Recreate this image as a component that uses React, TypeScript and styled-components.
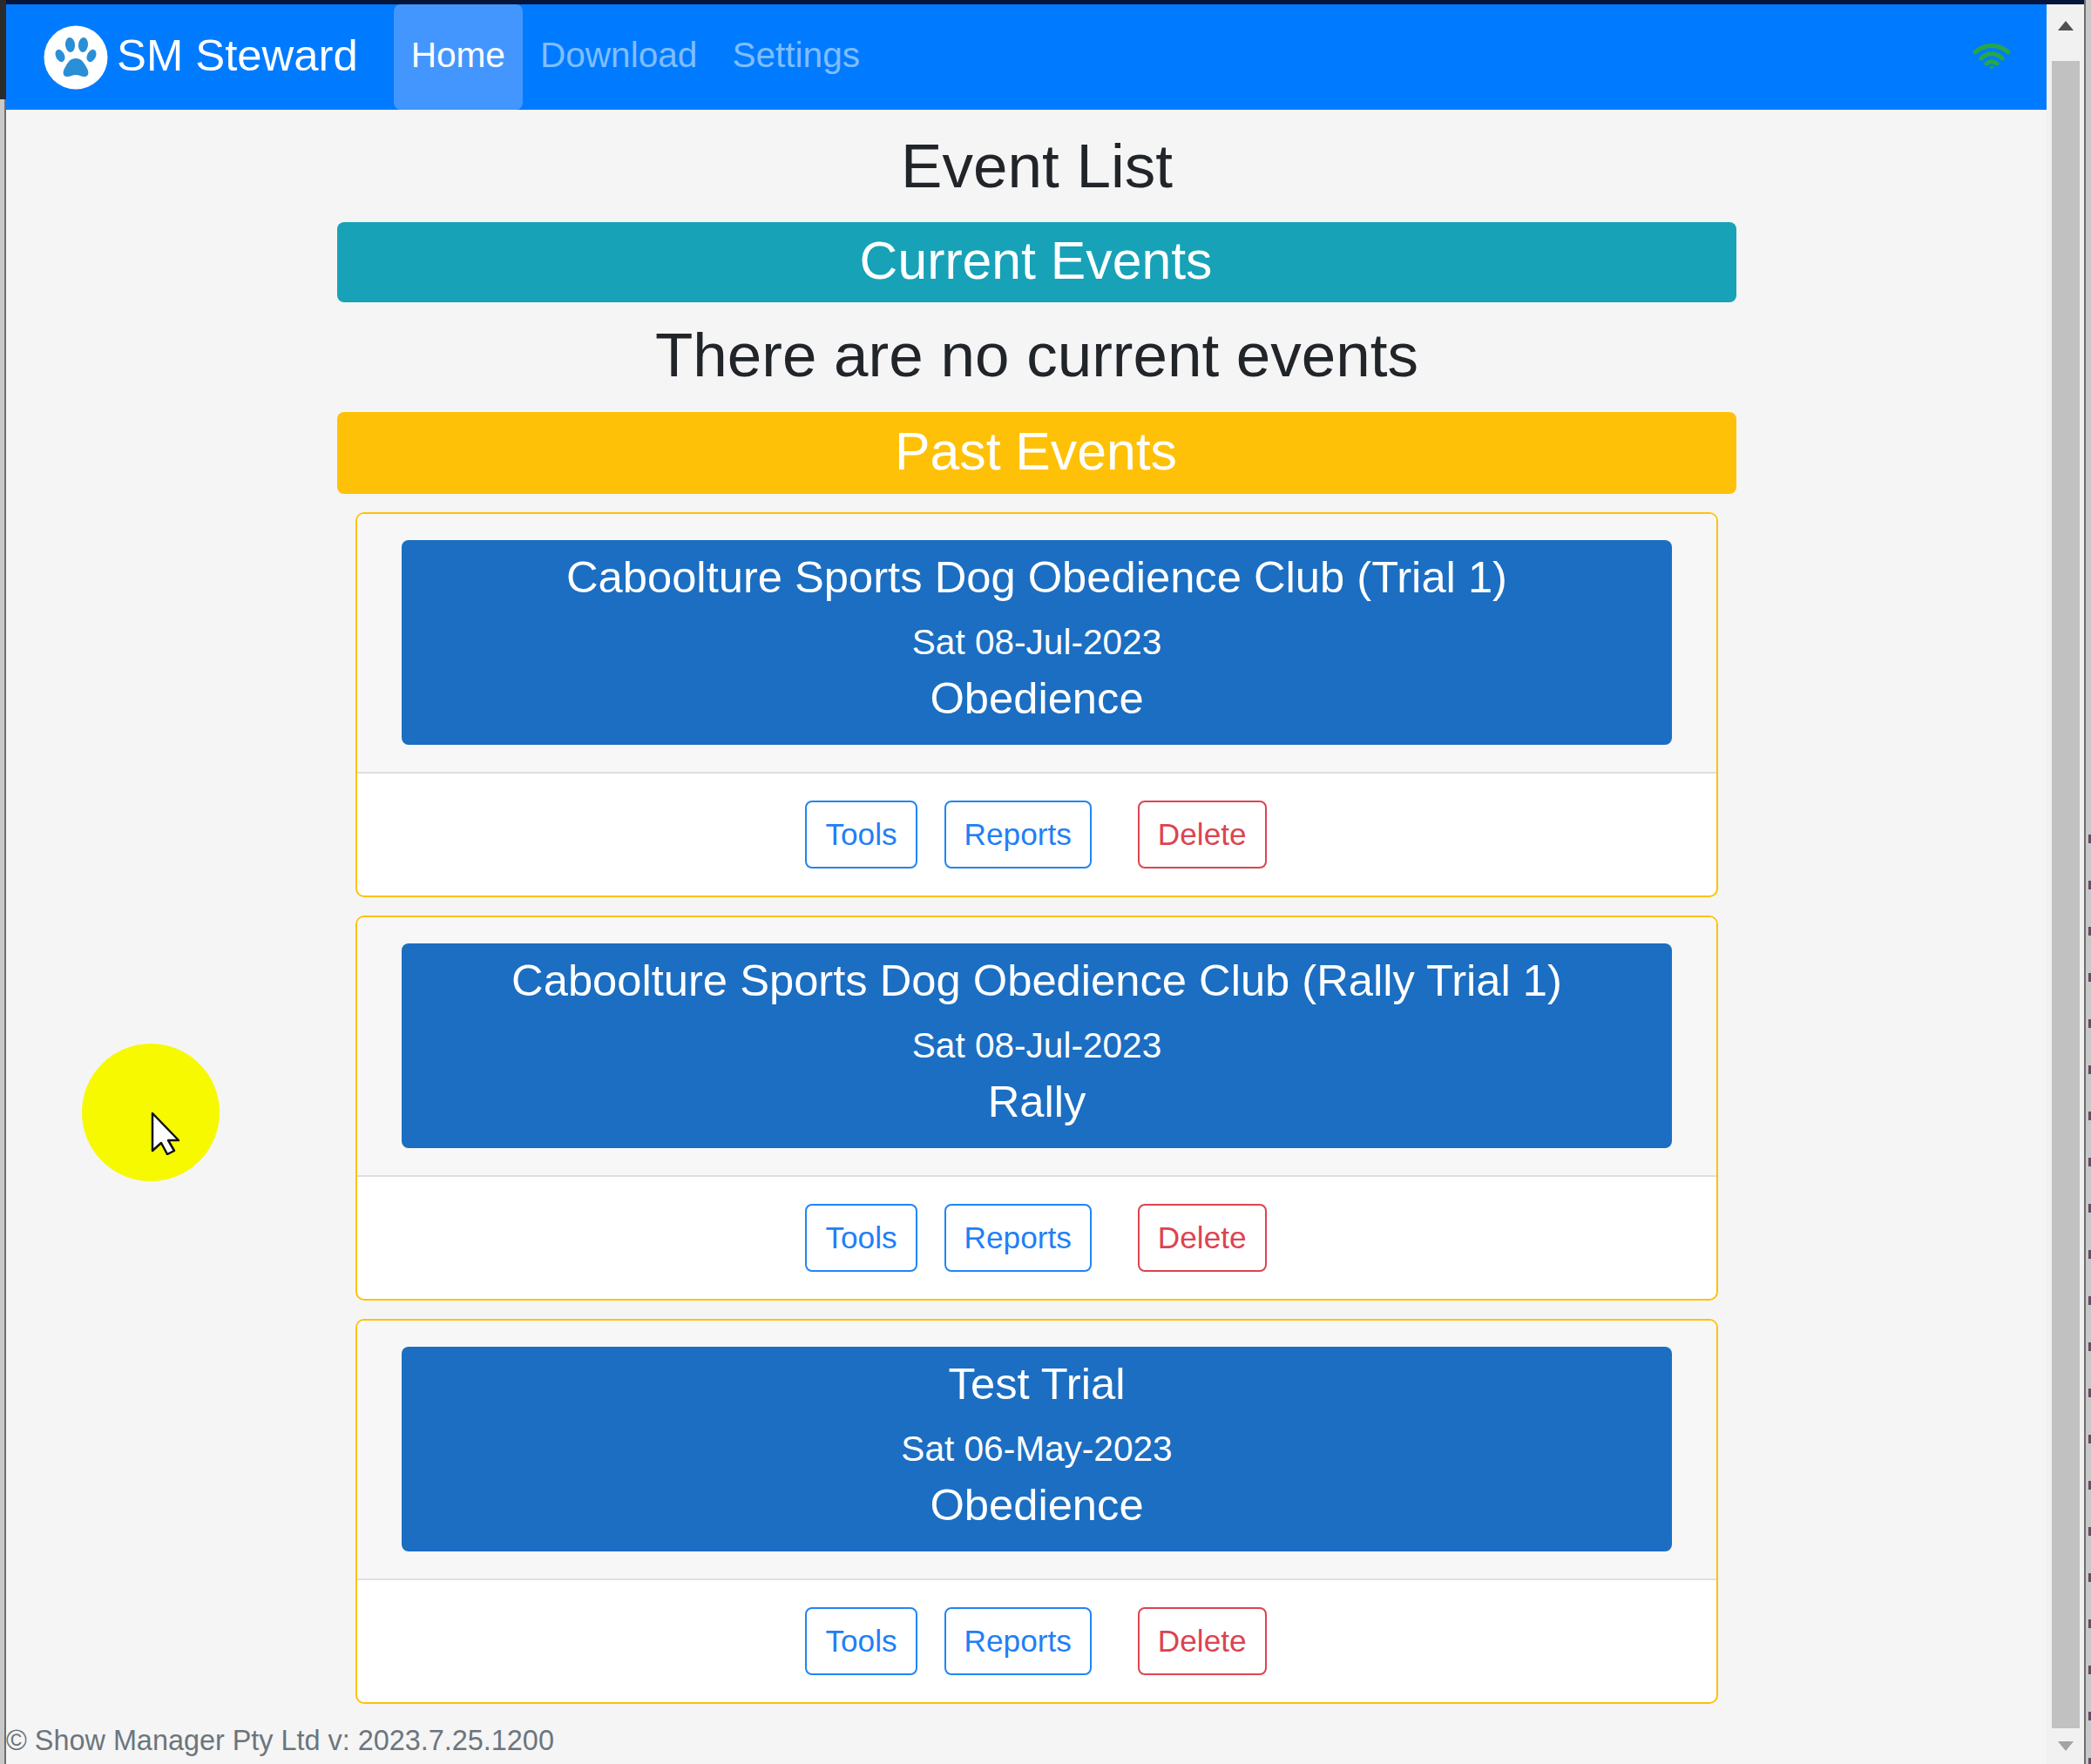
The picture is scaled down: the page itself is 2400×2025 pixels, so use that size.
import styled, { createGlobalStyle } from 'styled-components';

const GlobalStyle = createGlobalStyle`
  html, body {
    margin: 0;
    padding: 0;
    height: 2025px;
    overflow: hidden;
    background: #f5f5f5;
    font-family: "Liberation Sans", Arial, sans-serif;
  }
  * {
    box-sizing: border-box;
  }
`;

const Frame = styled.div`
  position: relative;
  display: flex;
  width: 2400px;
  height: 2025px;
`;

const LeftEdge = styled.div`
  flex: 0 0 7px;
  display: flex;
  flex-direction: column;
`;

const LeftEdgeDark = styled.div`
  flex: 0 0 114px;
  background: #2b2b2b;
`;

const LeftEdgeLight = styled.div`
  flex: 1;
  background: #c9c9c9;
  border-right: 2px solid #6e6e6e;
`;

const Main = styled.div`
  flex: 0 0 2385px;
  display: flex;
  flex-direction: column;
`;

const TopStrip = styled.div`
  flex: 0 0 5px;
  background: #04143a;
`;

const MainRow = styled.div`
  flex: 1;
  display: flex;
  min-height: 0;
`;

const Viewport = styled.div`
  flex: 0 0 2342px;
  display: flex;
  flex-direction: column;
  background: #f5f5f5;
`;

const Navbar = styled.nav`
  flex: 0 0 121px;
  display: flex;
  align-items: stretch;
  background: #007bff;
  padding: 0 41px 0 43px;
`;

const Brand = styled.a`
  display: flex;
  align-items: center;
  gap: 10px;
  margin-right: 41px;
  color: #fff;
  font-size: 50.8px;
`;

const BrandName = styled.span`
  padding-bottom: 5px;
`;

const NavLink = styled.a<{ $active?: boolean }>`
  display: flex;
  align-items: center;
  padding: 0 20px 5px;
  border-radius: 8px;
  font-size: 40.6px;
  color: ${(p) => (p.$active ? '#fff' : '#7fbdff')};
  background: ${(p) => (p.$active ? '#4496ff' : 'transparent')};
`;

const NavSpacer = styled.div`
  flex: 1;
`;

const WifiWrap = styled.div`
  display: flex;
  align-items: center;
  padding-bottom: 4px;
`;

const Content = styled.main`
  width: 1606px;
  margin-left: 380px;
`;

const PageTitle = styled.h1`
  margin: 0;
  height: 129px;
  line-height: 129px;
  font-size: 71px;
  font-weight: 400;
  text-align: center;
  color: #212529;
`;

const SectionBar = styled.h2<{ $tone: string; $height: number }>`
  margin: 0;
  height: ${(p) => p.$height}px;
  line-height: ${(p) => p.$height - 3}px;
  padding-right: 2px;
  font-size: 60.7px;
  font-weight: 400;
  text-align: center;
  color: #fff;
  background: ${(p) => p.$tone};
  border-radius: 8px;
`;

const EmptyNote = styled.h1`
  margin: 0;
  height: 126px;
  line-height: 122px;
  font-size: 71px;
  font-weight: 400;
  text-align: center;
  color: #212529;
`;

const CardList = styled.div`
  display: flex;
  flex-direction: column;
  gap: 21px;
  margin: 21px 21px 0;
`;

const Card = styled.section`
  height: 442px;
  display: flex;
  flex-direction: column;
  border: 2px solid #ffc107;
  border-radius: 10px;
  background: #fff;
  overflow: hidden;
`;

const CardHeader = styled.div`
  flex: 0 0 298px;
  padding: 30px 51px 0;
  background: #f7f7f7;
  border-bottom: 2px solid #dfdfdf;
`;

const EventBanner = styled.div`
  height: 235px;
  padding-top: 10px;
  text-align: center;
  color: #fff;
  background: #1b6ec2;
  border-radius: 8px;
`;

const EventName = styled.div`
  height: 66px;
  line-height: 66px;
  font-size: 50.7px;
`;

const EventDate = styled.div`
  height: 82px;
  line-height: 82px;
  font-size: 40.6px;
`;

const EventKind = styled.div`
  height: 48px;
  line-height: 48px;
  font-size: 50.7px;
`;

const CardFooter = styled.div`
  flex: 1;
  display: flex;
  justify-content: center;
  align-items: flex-start;
  padding-top: 31px;
  padding-right: 2px;
`;

const ActionButton = styled.button<{ $danger?: boolean; $gap: number }>`
  height: 78px;
  margin-left: ${(p) => p.$gap}px;
  padding: 0 21px;
  font-family: inherit;
  font-size: 35.2px;
  color: ${(p) => (p.$danger ? '#dc4450' : '#1f80f5')};
  background: #fff;
  border: 2px solid ${(p) => (p.$danger ? '#dc4450' : '#1f86f5')};
  border-radius: 8px;
`;

const FooterText = styled.footer`
  margin-top: auto;
  height: 43px;
  line-height: 32px;
  font-size: 32.4px;
  color: #6c757d;
`;

const ScrollBar = styled.div`
  flex: 0 0 43px;
  display: flex;
  flex-direction: column;
  padding: 0 5px 0 6px;
  background: #f1f1f1;
`;

const ScrollButton = styled.div<{ $height: number }>`
  flex: 0 0 ${(p) => p.$height}px;
  display: flex;
  align-items: center;
  justify-content: center;
`;

const ScrollArrow = styled.div<{ $down?: boolean }>`
  width: 0;
  height: 0;
  border-left: 9px solid transparent;
  border-right: 9px solid transparent;
  ${(p) =>
    p.$down
      ? 'border-top: 11px solid #a3a3a3;'
      : 'border-bottom: 11px solid #505050; margin-bottom: 16px;'}
`;

const ScrollThumb = styled.div`
  flex: 1;
  background: #c1c1c1;
`;

const RightEdge = styled.div`
  flex: 0 0 8px;
  display: flex;
  flex-direction: column;
  background: #c8c8c8;
  border-left: 2px solid #6e6e6e;
`;

const RightEdgeMarks = styled.div`
  margin-top: 958px;
  flex: 1;
  background: repeating-linear-gradient(
    to bottom,
    #6b4a63 0 10px,
    transparent 10px 53px
  );
  background-size: 3px 100%;
  background-position: right top;
  background-repeat: no-repeat;
`;

const CursorHalo = styled.div`
  position: absolute;
  left: 94px;
  top: 1198px;
  width: 158px;
  height: 158px;
  border-radius: 50%;
  background: #f6f900;
`;

const CursorArrow = styled.svg`
  position: absolute;
  left: 79px;
  top: 78px;
`;

const PawLogo = () => (
  <svg width="74" height="74" viewBox="0 0 74 74">
    <circle cx="37" cy="37" r="36.5" fill="#fff" />
    <g fill="#2a8fd6">
      <ellipse cx="19" cy="35" rx="5" ry="7.5" transform="rotate(-25 19 35)" />
      <ellipse cx="30.5" cy="22.5" rx="5.5" ry="8.5" transform="rotate(-6 30.5 22.5)" />
      <ellipse cx="45.5" cy="22.5" rx="5.5" ry="8.5" transform="rotate(6 45.5 22.5)" />
      <ellipse cx="55" cy="35" rx="5" ry="7.5" transform="rotate(25 55 35)" />
      <path d="M37 38c-6 0-9 4-12 10-3 4-4 11 2 11 4 0 6-2 10-2s6 2 10 2c6 0 5-7 2-11-3-6-6-10-12-10z" />
    </g>
  </svg>
);

const WifiIcon = () => (
  <svg width="44" height="34" viewBox="0 0 44 34" fill="none" stroke="#28a745" strokeWidth="5">
    <path d="M3 13C14 3 30 3 41 13" strokeLinecap="round" />
    <path d="M10 20C17 13 27 13 34 20" strokeLinecap="round" />
    <path d="M16 26C20 23 24 23 28 26" strokeLinecap="round" />
    <path d="M19 29h6l-3 4z" fill="#28a745" stroke="none" />
  </svg>
);

const events = [
  { name: 'Caboolture Sports Dog Obedience Club (Trial 1)', date: 'Sat 08-Jul-2023', kind: 'Obedience' },
  { name: 'Caboolture Sports Dog Obedience Club (Rally Trial 1)', date: 'Sat 08-Jul-2023', kind: 'Rally' },
  { name: 'Test Trial', date: 'Sat 06-May-2023', kind: 'Obedience' },
];

const App = () => {
  return (
    <Frame>
      <GlobalStyle />
      <LeftEdge>
        <LeftEdgeDark />
        <LeftEdgeLight />
      </LeftEdge>
      <Main>
        <TopStrip />
        <MainRow>
          <Viewport>
            <Navbar>
              <Brand>
                <PawLogo />
                <BrandName>SM Steward</BrandName>
              </Brand>
              <NavLink $active>Home</NavLink>
              <NavLink>Download</NavLink>
              <NavLink>Settings</NavLink>
              <NavSpacer />
              <WifiWrap>
                <WifiIcon />
              </WifiWrap>
            </Navbar>
            <Content>
              <PageTitle>Event List</PageTitle>
              <SectionBar $tone="#17a2b8" $height={92}>Current Events</SectionBar>
              <EmptyNote>There are no current events</EmptyNote>
              <SectionBar $tone="#ffc107" $height={94}>Past Events</SectionBar>
              <CardList>
                {events.map((ev) => (
                  <Card key={ev.name}>
                    <CardHeader>
                      <EventBanner>
                        <EventName>{ev.name}</EventName>
                        <EventDate>{ev.date}</EventDate>
                        <EventKind>{ev.kind}</EventKind>
                      </EventBanner>
                    </CardHeader>
                    <CardFooter>
                      <ActionButton $gap={0}>Tools</ActionButton>
                      <ActionButton $gap={31}>Reports</ActionButton>
                      <ActionButton $gap={53} $danger>Delete</ActionButton>
                    </CardFooter>
                  </Card>
                ))}
              </CardList>
            </Content>
            <FooterText>© Show Manager Pty Ltd v: 2023.7.25.1200</FooterText>
          </Viewport>
          <ScrollBar>
            <ScrollButton $height={65}>
              <ScrollArrow />
            </ScrollButton>
            <ScrollThumb />
            <ScrollButton $height={41}>
              <ScrollArrow $down />
            </ScrollButton>
          </ScrollBar>
        </MainRow>
      </Main>
      <RightEdge>
        <RightEdgeMarks />
      </RightEdge>
      <CursorHalo>
        <CursorArrow width="34" height="50" viewBox="0 0 34 50">
          <path d="M2 2v43l10-9 7 13 8-4-7-12h12z" fill="#fff" stroke="#111" strokeWidth="2.5" strokeLinejoin="round" />
        </CursorArrow>
      </CursorHalo>
    </Frame>
  );
};

export default App;
